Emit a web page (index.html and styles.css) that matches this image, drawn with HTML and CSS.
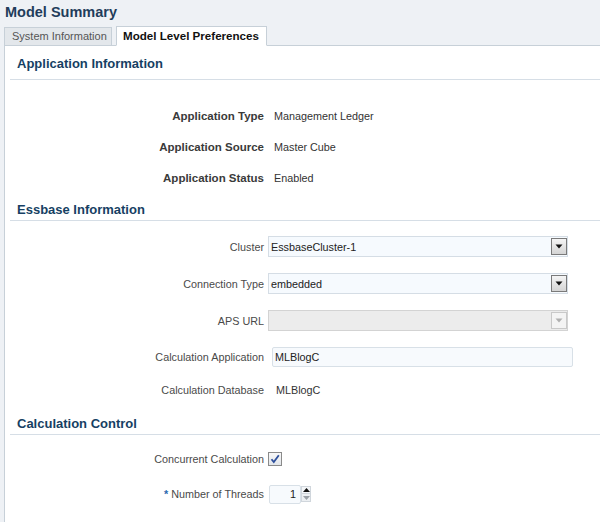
FILE: index.html
```html
<!DOCTYPE html>
<html>
<head>
<meta charset="utf-8">
<link rel="stylesheet" href="styles.css">
</head>
<body>
<div class="title">Model Summary</div>
<div class="tabs">
  <div class="tab tab-sys">System Information</div>
  <div class="tab tab-active">Model Level Preferences</div>
</div>
<div class="panel">
  <div class="section-head first">Application Information</div>
  <div class="form form-app">
    <div class="lbl bold">Application Type</div><div class="val">Management Ledger</div>
    <div class="lbl bold">Application Source</div><div class="val">Master Cube</div>
    <div class="lbl bold">Application Status</div><div class="val">Enabled</div>
  </div>

  <div class="section-head">Essbase Information</div>
  <div class="form form-ess">
    <div class="lbl">Cluster</div>
    <div class="select"><span class="sel-text">EssbaseCluster-1</span><span class="sel-btn"><svg width="8" height="5" viewBox="0 0 8 5"><path d="M0.5 0.5h7L4 4.5z" fill="#111"/></svg></span></div>
    <div class="lbl">Connection Type</div>
    <div class="select"><span class="sel-text">embedded</span><span class="sel-btn"><svg width="8" height="5" viewBox="0 0 8 5"><path d="M0.5 0.5h7L4 4.5z" fill="#111"/></svg></span></div>
    <div class="lbl">APS URL</div>
    <div class="select disabled"><span class="sel-text"></span><span class="sel-btn"><svg width="8" height="5" viewBox="0 0 8 5"><path d="M0.5 0.5h7L4 4.5z" fill="#b0b0b0"/></svg></span></div>
    <div class="lbl">Calculation Application</div>
    <div class="textbox">MLBlogC</div>
    <div class="lbl short">Calculation Database</div>
    <div class="val db short">MLBlogC</div>
  </div>

  <div class="section-head">Calculation Control</div>
  <div class="form form-calc">
    <div class="lbl chk-row">Concurrent Calculation</div>
    <div class="chk-row"><span class="checkbox"><svg width="12" height="12" viewBox="0 0 12 12"><path d="M2.5 6.2 L4.8 9 L9.8 2.2" fill="none" stroke="#2d4f9c" stroke-width="1.8"/></svg></span></div>
    <div class="lbl spin-row"><span class="req">*</span> Number of Threads</div>
    <div class="spin-row"><span class="spinner"><span class="spin-input">1</span><span class="spin-btns"><span class="spin-up"><svg width="7" height="4" viewBox="0 0 7 4"><path d="M0 4h7L3.5 0z" fill="#111"/></svg></span><span class="spin-down"><svg width="7" height="4" viewBox="0 0 7 4"><path d="M0 0h7L3.5 4z" fill="#9aa0a6"/></svg></span></span></span></div>
  </div>
</div>
</body>
</html>
```
FILE: styles.css
```css
html, body {
  margin: 0;
  padding: 0;
  height: 100%;
  background: #eef1f5;
  font-family: "Liberation Sans", Arial, sans-serif;
  font-size: 10.8px;
  color: #333;
  overflow: hidden;
}
.title {
  font-size: 14.5px;
  font-weight: bold;
  color: #1f3d5b;
  line-height: 24px;
  height: 26px;
  padding-left: 5px;
}
.tabs {
  display: flex;
  align-items: flex-end;
  gap: 4px;
  height: 20px;
  margin-left: 4px;
  margin-bottom: -1px;
  position: relative;
  z-index: 1;
}
.tab {
  box-sizing: border-box;
  border: 1px solid #c7d0d8;
  white-space: nowrap;
}
.tab-sys {
  width: 108px;
  height: 19px;
  background: #e3e7eb;
  color: #555;
  font-size: 11px;
  line-height: 17px;
  padding-left: 7px;
}
.tab-active {
  width: 151px;
  height: 20px;
  background: #fff;
  border-bottom-color: #fff;
  color: #111;
  font-weight: bold;
  font-size: 11.6px;
  line-height: 18px;
  padding-left: 6px;
}
.panel {
  box-sizing: border-box;
  margin-left: 4px;
  border-top: 1px solid #c7d0d8;
  border-left: 1px solid #c7d0d8;
  background: #fff;
  height: calc(100% - 45px);
}
.section-head {
  margin-left: 5px;
  padding: 9px 0 2px 7px;
  font-size: 13px;
  line-height: 16px;
  font-weight: bold;
  color: #163f63;
  border-bottom: 1px solid #d6dee6;
}
.section-head.first {
  padding-top: 10px;
  padding-bottom: 7px;
}
.form {
  display: grid;
  grid-template-columns: 259px 1fr;
  column-gap: 4px;
  align-items: center;
}
.lbl {
  text-align: right;
  color: #4a4a4a;
  white-space: nowrap;
}
.lbl.bold {
  font-weight: bold;
  font-size: 11.5px;
  color: #3a3a3a;
}
.form-app {
  padding-top: 20px;
  grid-auto-rows: 31px;
}
.val {
  padding-left: 6px;
  color: #333;
}
.form-ess {
  padding-top: 15px;
  padding-bottom: 10px;
  row-gap: 16px;
}
.select {
  box-sizing: border-box;
  width: 300px;
  height: 21px;
  border: 1px solid #d5dde5;
  background: #f6fafe;
  display: flex;
  align-items: center;
  justify-content: space-between;
  padding: 0 0 0 2px;
}
.sel-text {
  color: #222;
}
.sel-btn {
  box-sizing: border-box;
  width: 16px;
  height: 17px;
  border: 1px solid #7a7a7a;
  background: linear-gradient(#f5f5f5, #d4d4d4);
  display: flex;
  align-items: center;
  justify-content: center;
}
.select.disabled {
  background: #ececec;
  border-color: #d3d3d3;
}
.select.disabled .sel-btn {
  border-color: #c9c9c9;
  background: #f4f4f4;
}
.textbox {
  box-sizing: border-box;
  margin-left: 4px;
  width: 301px;
  height: 20px;
  border: 1px solid #d8e0e7;
  border-radius: 2px;
  background: #f7fafd;
  line-height: 18px;
  padding-left: 2px;
  color: #222;
}
.short {
  height: 14px;
  line-height: 14px;
}
.val.db {
  padding-left: 8px;
}
.form-calc {
  padding-top: 17px;
  row-gap: 19px;
}
.chk-row {
  height: 14px;
  line-height: 14px;
}
.checkbox {
  box-sizing: border-box;
  display: block;
  width: 14px;
  height: 14px;
  border: 1px solid #8a8a8a;
  background: linear-gradient(#f8f8f8, #e2e6ea);
}
.checkbox svg {
  display: block;
}
.spin-row {
  height: 19px;
  line-height: 19px;
}
.req {
  color: #2a6ab0;
  font-weight: bold;
}
.spinner {
  display: flex;
  margin-left: 1px;
  height: 19px;
}
.spin-input {
  box-sizing: border-box;
  width: 32px;
  height: 19px;
  border: 1px solid #d8e0e7;
  border-radius: 2px;
  background: #f7fafd;
  text-align: right;
  padding-right: 4px;
  line-height: 17px;
  color: #222;
}
.spin-btns {
  display: flex;
  flex-direction: column;
  width: 10px;
  margin-top: 1px;
}
.spin-up, .spin-down {
  box-sizing: border-box;
  height: 8px;
  display: flex;
  align-items: center;
  justify-content: center;
  background: #eceff2;
  border: 1px solid #d0d6dc;
}
.spin-up {
  background: #f4f6f8;
}
.spin-down {
  border-top: none;
}
.spin-btns svg {
  display: block;
}
```
